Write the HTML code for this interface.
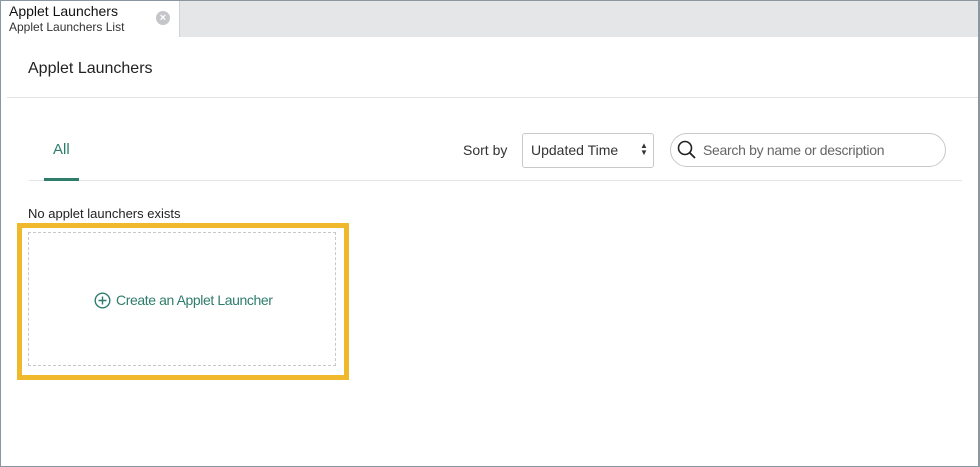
<!DOCTYPE html>
<html><head><style>
*{box-sizing:border-box;margin:0;padding:0}
body{width:980px;height:467px;position:relative;background:#fff;font-family:"Liberation Sans",sans-serif;color:#222;overflow:hidden}
.frame{position:absolute;left:0;top:0;width:980px;height:467px;border:1px solid #8a96a0;border-right-width:2px}
.tabbar{position:absolute;left:1px;top:1px;width:977px;height:36px;background:#e5e6e8}
.tab{position:absolute;left:1px;top:1px;width:179px;height:36px;background:#fff;border-right:1px solid #d0d2d5}
.abs{position:absolute;white-space:nowrap}
</style></head><body>
<div class="tabbar"></div>
<div class="tab"></div>
<div class="abs" style="left:9px;top:3px;font-size:14px;color:#111">Applet Launchers</div>
<div class="abs" style="left:9px;top:20px;font-size:12px;color:#333">Applet Launchers List</div>
<div class="abs" style="left:156px;top:11px;width:14px;height:14px;border-radius:50%;background:#c4c6c9;color:#fff;font-size:11px;line-height:14px;text-align:center;font-weight:bold">×</div>
<div class="abs" style="left:28px;top:60px;font-size:16px;color:#222">Applet Launchers</div>
<div class="abs" style="left:7px;top:97px;width:971px;height:1px;background:#e3e3e3"></div>
<div class="abs" style="left:53px;top:141px;font-size:15px;color:#2e7d6b">All</div>
<div class="abs" style="left:29px;top:180px;width:933px;height:1px;background:#e5e5e5"></div>
<div class="abs" style="left:44px;top:178px;width:35px;height:3px;background:#2e7d6b"></div>
<div class="abs" style="left:463px;top:142px;font-size:14px;color:#333">Sort by</div>
<div class="abs" style="left:522px;top:133px;width:132px;height:35px;border:1px solid #c8c8c8;border-radius:3px"></div>
<div class="abs" style="left:531px;top:142px;font-size:14px;color:#333">Updated Time</div>
<div class="abs" style="left:640px;top:142px;font-size:8px;line-height:7px;color:#333">▲<br>▼</div>
<div class="abs" style="left:670px;top:133px;width:276px;height:34px;border:1px solid #c8c8c8;border-radius:17px"></div>
<svg class="abs" style="left:676px;top:139px" width="22" height="22" viewBox="0 0 22 22"><circle cx="9" cy="9" r="6.5" fill="none" stroke="#222" stroke-width="1.6"/><line x1="13.7" y1="13.7" x2="19" y2="19" stroke="#222" stroke-width="1.8"/></svg>
<div class="abs" style="left:703px;top:142px;font-size:14px;color:#666;letter-spacing:-0.3px">Search by name or description</div>
<div class="abs" style="left:28px;top:206px;font-size:13px;color:#222">No applet launchers exists</div>
<div class="abs" style="left:17px;top:223px;width:332px;height:157px;border:5px solid #f0b92c"></div>
<div class="abs" style="left:28px;top:232px;width:308px;height:134px;border:1px dashed #c8c8c8"></div>
<svg class="abs" style="left:94px;top:292px" width="17" height="17" viewBox="0 0 17 17"><circle cx="8.5" cy="8.5" r="7.3" fill="none" stroke="#2e7d6b" stroke-width="1.4"/><path d="M8.5 4.5v8M4.5 8.5h8" stroke="#2e7d6b" stroke-width="1.4"/></svg>
<div class="abs" style="left:116px;top:292px;font-size:14px;color:#2e7d6b;letter-spacing:-0.4px">Create an Applet Launcher</div>
<div class="frame"></div>
</body></html>
